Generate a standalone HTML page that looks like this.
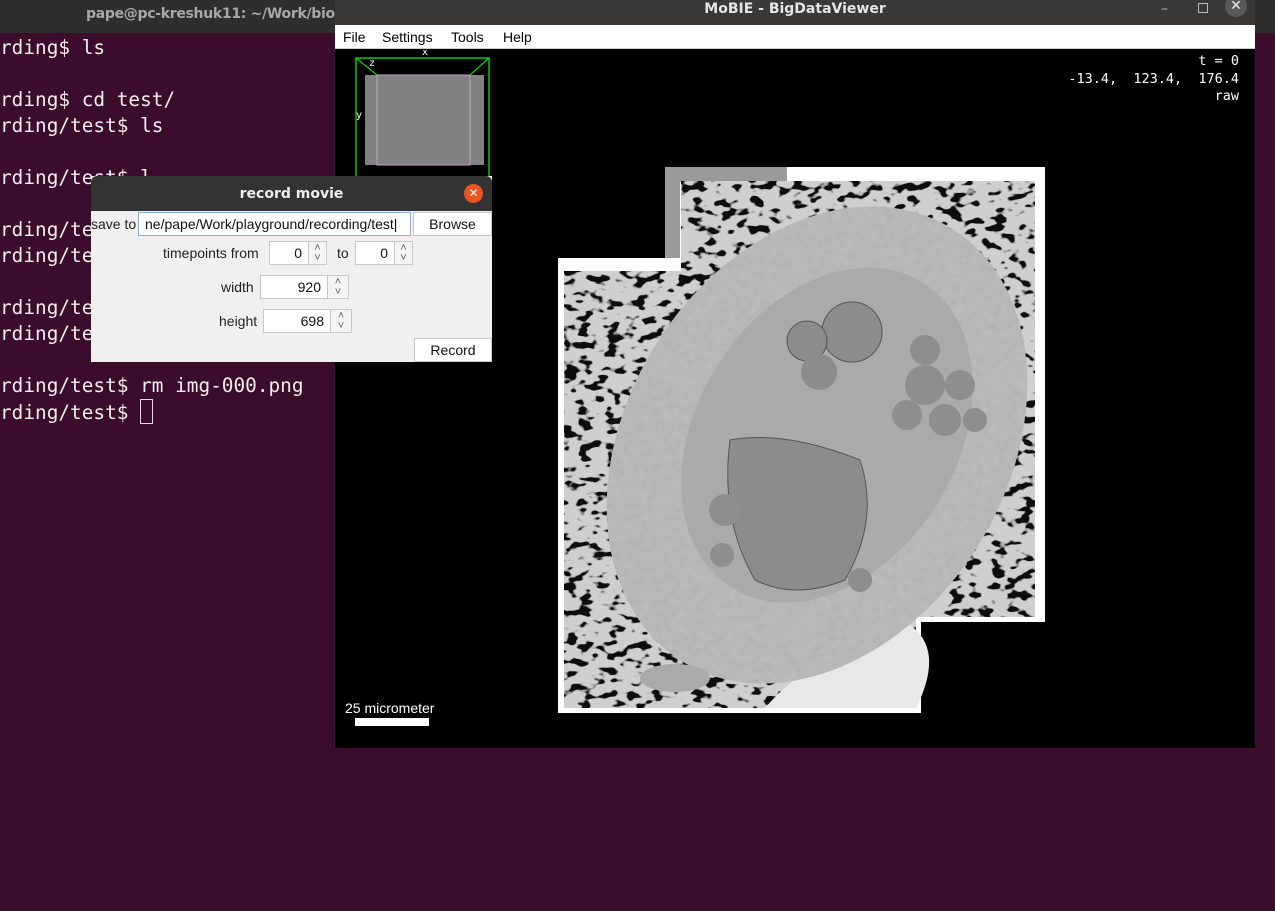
<!DOCTYPE html>
<html><head><meta charset="utf-8"><style>
*{margin:0;padding:0;box-sizing:border-box}
body{width:1275px;height:911px;overflow:hidden;background:#3b0c2b;position:relative;font-family:"Liberation Sans",sans-serif}
.abs{position:absolute}
#ttitle{left:0;top:0;width:1275px;height:33px;background:#2e2e2e;}
#ttitle span{position:absolute;left:86px;top:6px;color:#a8a8a8;font-weight:bold;font-size:14px;font-family:"DejaVu Sans",sans-serif;letter-spacing:-0.3px}
#term{left:0;top:35px;font-family:"DejaVu Sans Mono",monospace;font-size:19.4px;line-height:26px;color:#eeeeec;white-space:pre}
#bdv{left:335px;top:0;width:920px;height:748px;background:#000}
#btitle{left:0;top:0;width:920px;height:25px;background:#3a3937;color:#e6e6e6;font-weight:bold;font-size:14px;text-align:center;line-height:18px;font-family:"DejaVu Sans",sans-serif}
#menu{left:0;top:25px;width:920px;height:24px;background:#fff;border-bottom:1px solid #ccc;font-size:14px;color:#000}
#menu span{position:absolute;top:4px}
.ov{font-family:"DejaVu Sans Mono",monospace;font-size:13.5px;color:#fff;text-align:right;right:16px;width:300px;white-space:pre}
#dlg{left:91px;top:176px;width:401px;height:186px;background:#f0f0f0}
#dlghead{left:0;top:0;width:401px;height:35px;background:#333;border-radius:6px 6px 0 0;color:#eee;font-weight:bold;font-size:14px;text-align:center;line-height:37px;font-family:"DejaVu Sans",sans-serif}
.lbl{font-size:14px;color:#222}
.box{background:#fff;border:1px solid #c8c8c8;font-size:14px;text-align:right;color:#111}
.spin{border:1px solid #c8c8c8;background:#f4f4f4;font-size:11px;color:#666;text-align:center;line-height:10px;padding-top:1px}
.btn{background:#fff;border:1px solid #c8c8c8;font-size:14px;text-align:center;color:#111}
</style></head><body>
<div id="ttitle" class="abs"><span>pape@pc-kreshuk11: ~/Work/bioimage</span></div>
<div id="term" class="abs">rding$ ls

rding$ cd test/
rding/test$ ls

rding/test$ l

rding/test$
rding/test$

rding/test$
rding/test$

rding/test$ rm img-000.png
rding/test$ <span style="display:inline-block;width:13px;height:25px;border:1px solid #ddd;vertical-align:-5px"></span></div>

<div id="bdv" class="abs">
 <div id="btitle" class="abs">MoBIE - BigDataViewer
  <span style="position:absolute;left:826px;top:0;font-weight:normal;color:#bbb">–</span>
  <span style="position:absolute;left:863px;top:3px;width:10px;height:10px;border:1px solid #bbb"></span>
  <span style="position:absolute;left:890px;top:-5px;width:22px;height:22px;border-radius:11px;background:#5a5a58;color:#eee;line-height:22px;font-weight:normal">✕</span>
 </div>
 <div id="menu" class="abs"><span style="left:8px">File</span><span style="left:47px">Settings</span><span style="left:116px">Tools</span><span style="left:168px">Help</span></div>
 <svg class="abs" style="left:0;top:50px" width="920" height="698">
  <defs>
   <filter id="spk" x="0" y="0" width="100%" height="100%">
    <feTurbulence type="fractalNoise" baseFrequency="0.07 0.12" numOctaves="2" seed="4" result="n"/>
    <feColorMatrix in="n" type="matrix" values="0 0 0 0 0  0 0 0 0 0  0 0 0 0 0  -12 0 0 0 5.6" result="a"/>
    <feFlood flood-color="#cfcfcf" result="bg"/>
    <feFlood flood-color="#111" result="blk"/>
    <feComposite in="blk" in2="a" operator="in" result="dk"/>
    <feMerge result="m"><feMergeNode in="bg"/><feMergeNode in="dk"/></feMerge>
    <feComposite in="m" in2="SourceGraphic" operator="in"/>
   </filter>
   <filter id="tx"><feTurbulence type="fractalNoise" baseFrequency="0.15" numOctaves="2" seed="2"/><feColorMatrix type="matrix" values="0 0 0 0 0.6 0 0 0 0 0.6 0 0 0 0 0.6 0.5 0 0 0 -0.1"/><feComposite in2="SourceGraphic" operator="in"/></filter>
  </defs>
  <rect x="21" y="8" width="133" height="125" fill="none" stroke="#0f0" stroke-width="1.2"/>
  <line x1="21" y1="8" x2="42" y2="25" stroke="#0f0"/><line x1="154" y1="8" x2="135" y2="25" stroke="#0f0"/>
  <rect x="30" y="25" width="119" height="90" fill="#808080"/>
  <rect x="42" y="25" width="93" height="90" fill="none" stroke="#c8a0c8"/>
  <text x="34" y="16" fill="#fff" font-size="10" font-family="DejaVu Sans Mono">z</text>
  <text x="87" y="5" fill="#fff" font-size="10" font-family="DejaVu Sans Mono">x</text>
  <text x="21" y="68" fill="#fff" font-size="10" font-family="DejaVu Sans Mono">y</text>
  <polygon points="452,117 710,117 710,572 586,572 586,663 223,663 223,208 345,208 345,132 452,132" fill="#fff"/>
  <polygon points="330,117 452,117 452,132 345,132 345,208 330,208" fill="#9a9a9a"/>
  <polygon points="346,131 700,131 700,567 581,567 581,658 229,658 229,221 346,221" fill="#000" filter="url(#spk)"/>
  <path d="M575,575 Q610,600 581,658 L430,658 Q480,600 575,575Z" fill="#e8e8e8"/>
  <ellipse cx="482" cy="395" rx="190" ry="255" transform="rotate(32 482 395)" fill="#b4b4b4"/>
  <ellipse cx="482" cy="395" rx="190" ry="255" transform="rotate(32 482 395)" fill="#b4b4b4" filter="url(#tx)"/>
  <ellipse cx="492" cy="385" rx="130" ry="180" transform="rotate(32 492 385)" fill="#aaa"/>
  <path d="M395,390 Q450,380 525,410 Q545,470 510,530 Q460,550 420,530 Q385,470 395,390Z" fill="#8c8c8c" stroke="#555"/>
  <circle cx="517" cy="282" r="30" fill="#8c8c8c" stroke="#555"/>
  <circle cx="472" cy="291" r="20" fill="#8c8c8c" stroke="#555"/>
  <circle cx="484" cy="322" r="18" fill="#8c8c8c"/>
  <circle cx="590" cy="335" r="20" fill="#8e8e8e"/><circle cx="625" cy="335" r="15" fill="#8e8e8e"/>
  <circle cx="572" cy="365" r="15" fill="#8e8e8e"/><circle cx="610" cy="370" r="16" fill="#8e8e8e"/>
  <circle cx="590" cy="300" r="15" fill="#8e8e8e"/><circle cx="640" cy="370" r="12" fill="#8e8e8e"/>
  <circle cx="390" cy="460" r="16" fill="#8e8e8e"/><circle cx="387" cy="505" r="12" fill="#8e8e8e"/>
  <circle cx="525" cy="530" r="12" fill="#8e8e8e"/>
  <ellipse cx="340" cy="628" rx="35" ry="14" fill="#aaa"/>
  <rect x="20" y="668" width="74" height="8" fill="#fff"/>
 </svg>
 <div class="abs ov" style="top:53px">t = 0</div>
 <div class="abs ov" style="top:71px">-13.4,  123.4,  176.4</div>
 <div class="abs ov" style="top:88px">raw</div>
 <div class="abs" style="left:10px;top:700px;color:#fff;font-size:14px">25 micrometer</div>
</div>

<div id="dlg" class="abs">
 <div id="dlghead" class="abs">record movie
  <span style="position:absolute;left:373px;top:8px;width:19px;height:19px;border-radius:10px;background:#e95420;color:#fff;font-size:12px;line-height:19px;font-weight:normal">✕</span></div>
 <div class="abs lbl" style="left:0;top:40px">save to</div>
 <div class="abs box" style="left:47px;top:36px;width:273px;height:24px;border:1px solid #8aaee0;text-align:left;padding-left:6px;line-height:22px;white-space:nowrap;overflow:hidden">ne/pape/Work/playground/recording/test|</div>
 <div class="abs btn" style="left:322px;top:36px;width:79px;height:24px;line-height:22px">Browse</div>
 <div class="abs lbl" style="left:72px;top:69px">timepoints from</div>
 <div class="abs box" style="left:178px;top:65px;width:40px;height:24px;line-height:22px;padding-right:6px">0</div>
 <div class="abs spin" style="left:217px;top:65px;width:19px;height:24px">˄<br>˅</div>
 <div class="abs lbl" style="left:246px;top:69px">to</div>
 <div class="abs box" style="left:264px;top:65px;width:40px;height:24px;line-height:22px;padding-right:6px">0</div>
 <div class="abs spin" style="left:303px;top:65px;width:19px;height:24px">˄<br>˅</div>
 <div class="abs lbl" style="left:130px;top:103px">width</div>
 <div class="abs box" style="left:169px;top:99px;width:68px;height:24px;line-height:22px;padding-right:6px">920</div>
 <div class="abs spin" style="left:236px;top:99px;width:22px;height:24px">˄<br>˅</div>
 <div class="abs lbl" style="left:128px;top:137px">height</div>
 <div class="abs box" style="left:172px;top:133px;width:68px;height:24px;line-height:22px;padding-right:6px">698</div>
 <div class="abs spin" style="left:239px;top:133px;width:22px;height:24px">˄<br>˅</div>
 <div class="abs btn" style="left:323px;top:162px;width:78px;height:24px;line-height:22px">Record</div>
</div>
</body></html>
